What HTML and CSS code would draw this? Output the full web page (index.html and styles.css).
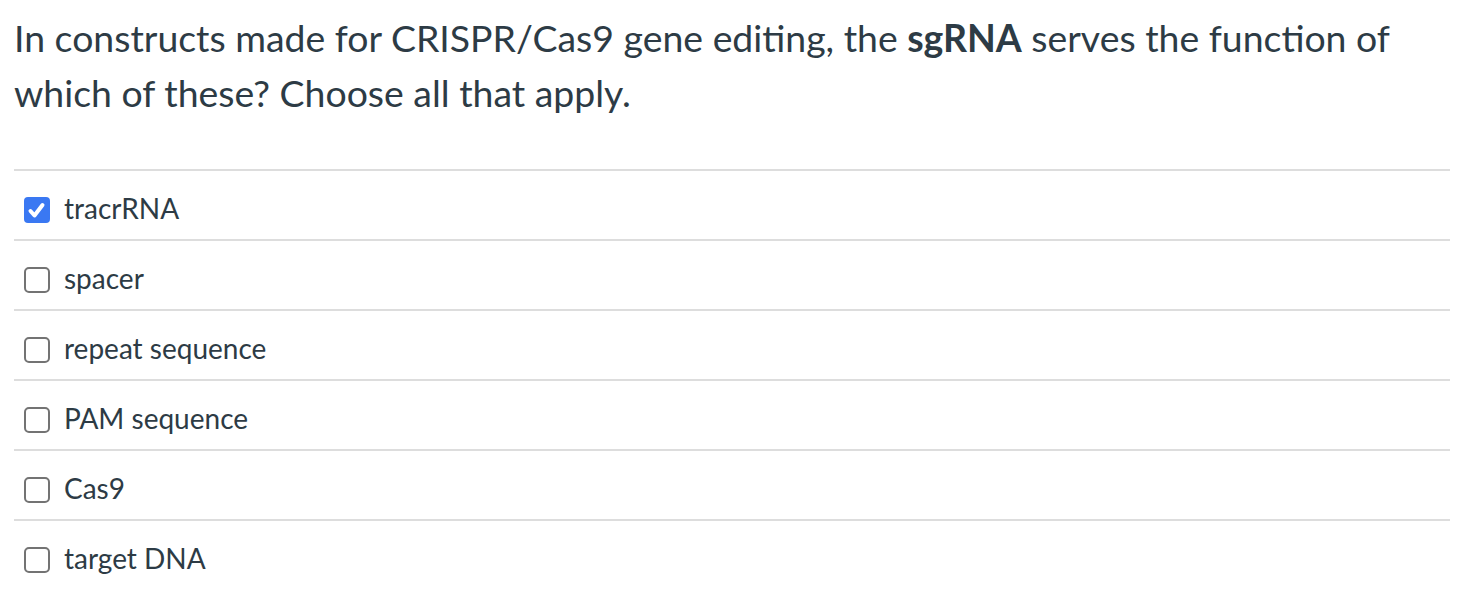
FILE: index.html
```html
<!DOCTYPE html>
<html>
<head>
<meta charset="utf-8">
<link rel="stylesheet" href="styles.css">
</head>
<body>
<div class="question">
  <p class="question-text">In constructs made for CRISPR/Cas9 gene editing, the <strong>sgRNA</strong> serves the function of which of these? Choose all that apply.</p>
  <div class="answers">
    <label class="answer">
      <span class="box checked"><svg viewBox="0 0 26 26" width="26" height="26"><path d="M6.5 14 L10.5 18.5 L18.5 8" fill="none" stroke="#fff" stroke-width="4" stroke-linecap="round" stroke-linejoin="round"/></svg></span>
      <span class="label">tracrRNA</span>
    </label>
    <label class="answer"><span class="box"></span><span class="label">spacer</span></label>
    <label class="answer"><span class="box"></span><span class="label">repeat sequence</span></label>
    <label class="answer"><span class="box"></span><span class="label">PAM sequence</span></label>
    <label class="answer"><span class="box"></span><span class="label">Cas9</span></label>
    <label class="answer"><span class="box"></span><span class="label">target DNA</span></label>
  </div>
</div>
</body>
</html>
```
FILE: styles.css
```css
html, body {
  margin: 0;
  padding: 0;
  background: #fff;
}
body {
  font-family: Lato, "Noto Sans", sans-serif;
  color: #2d3b45;
}
.question {
  padding: 10px 12px 0 14px;
}
.question-text {
  margin: 0;
  font-size: 37.4px;
  line-height: 55px;
}
.question-text strong {
  font-weight: 700;
}
.answers {
  margin-top: 49px;
}
.answer {
  display: flex;
  align-items: center;
  gap: 14px;
  height: 58px;
  padding: 10px 0 0 10px;
  border-top: 2px solid #dddddd;
  font-size: 28px;
}
.label {
  margin-bottom: 5px;
}
.box {
  width: 26px;
  height: 26px;
  box-sizing: border-box;
  border: 2px solid #737373;
  border-radius: 5px;
  flex: none;
  display: block;
}
.box.checked {
  border: none;
  background: #3a78f2;
  border-radius: 4px;
}
.box svg {
  display: block;
}
```
